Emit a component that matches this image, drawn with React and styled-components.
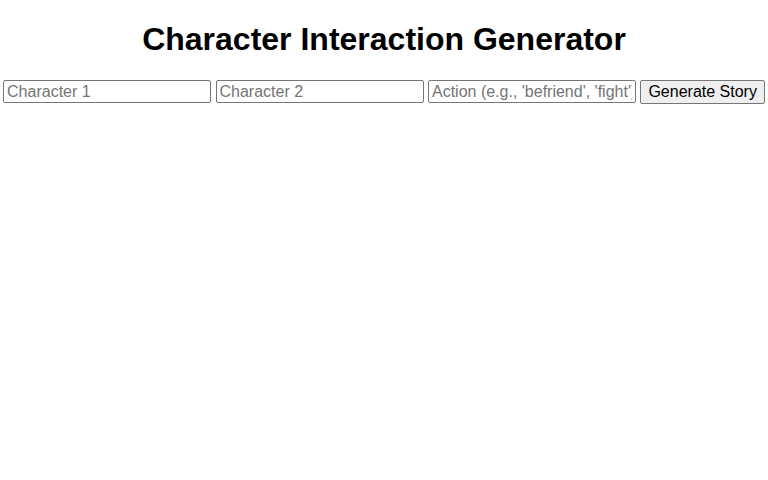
import React, { useState } from 'react';
import styled, { createGlobalStyle } from 'styled-components';

const GlobalStyle = createGlobalStyle`
  body {
    margin: 0;
    background: #fff;
    font-family: "Liberation Sans", Arial, sans-serif;
  }
`;

const Page = styled.div`
  text-align: center;
`;

const Title = styled.h1`
  font-size: 32px;
  font-weight: bold;
  margin: 21.44px 0;
  color: #000;
`;

const Form = styled.div`
  font-size: 16px;
`;

const Field = styled.input`
  font-family: inherit;
  font-size: 16px;
  width: 208px;
  height: 23px;
  box-sizing: border-box;
  padding: 1px 3px;
  border: 1px solid #767676;
  border-radius: 2px;
  vertical-align: middle;
  color: #000;

  &::placeholder {
    color: #757575;
  }
`;

const Button = styled.button`
  font-family: inherit;
  font-size: 16px;
  height: 24px;
  padding: 1px 7px;
  box-sizing: border-box;
  background: #efefef;
  border: 1px solid #767676;
  border-radius: 2px;
  color: #000;
  vertical-align: middle;
`;

export default function App() {
  const [first, setFirst] = useState('');
  const [second, setSecond] = useState('');
  const [action, setAction] = useState('');

  return (
    <>
      <GlobalStyle />
      <Page>
        <Title>Character Interaction Generator</Title>
        <Form>
          <Field placeholder="Character 1" value={first} onChange={e => setFirst(e.target.value)} />{' '}
          <Field placeholder="Character 2" value={second} onChange={e => setSecond(e.target.value)} />{' '}
          <Field placeholder="Action (e.g., 'befriend', 'fight')" value={action} onChange={e => setAction(e.target.value)} />{' '}
          <Button>Generate Story</Button>
        </Form>
      </Page>
    </>
  );
}
